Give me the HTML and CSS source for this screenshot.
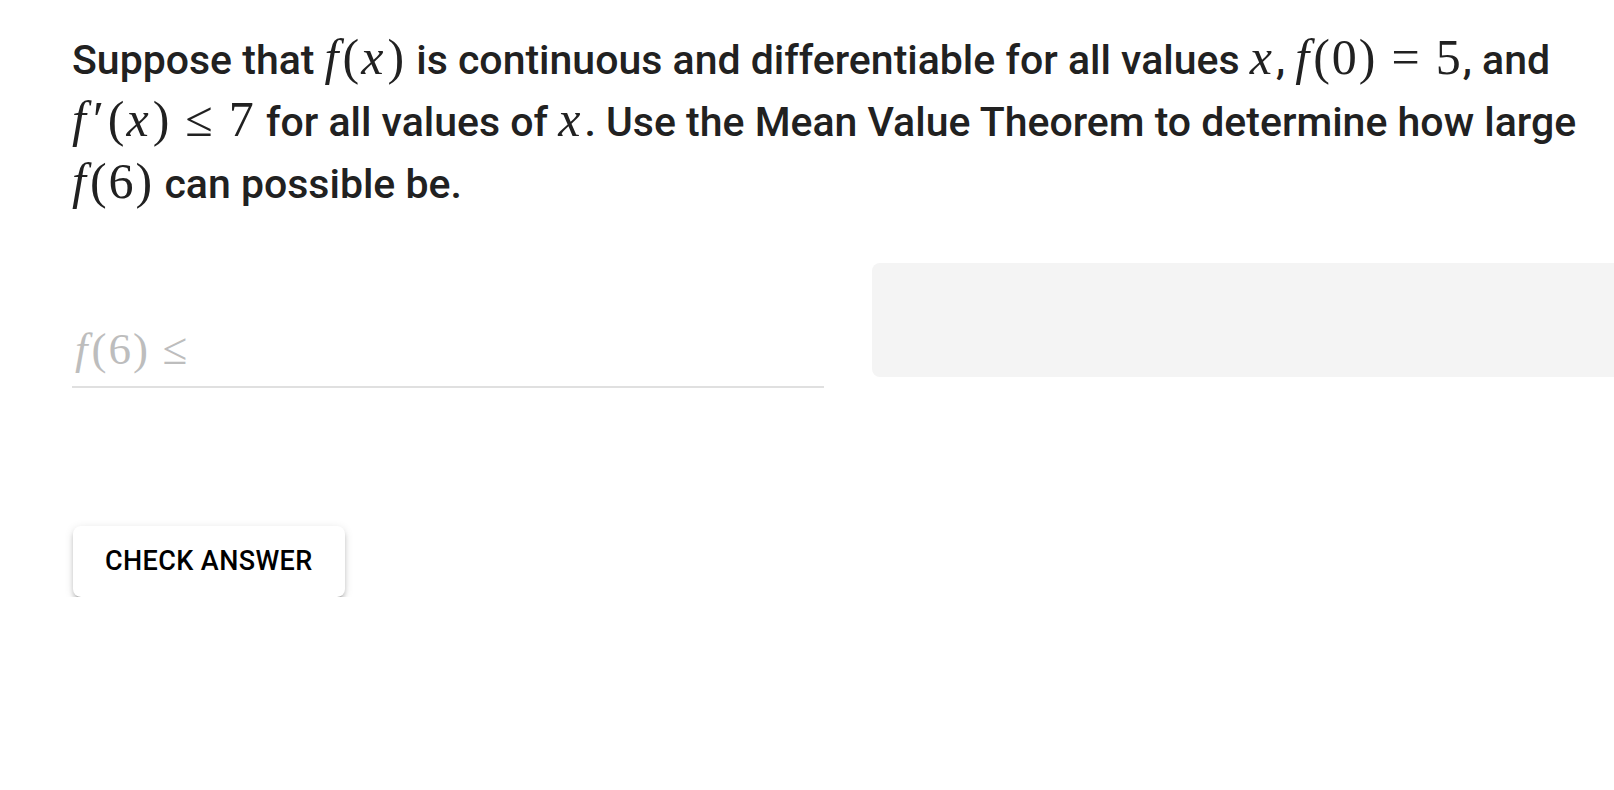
FILE: index.html
```html
<!DOCTYPE html>
<html lang="en">
<head>
    <meta charset="UTF-8">
    <meta name="viewport" content="width=device-width, initial-scale=1.0">
    <title>Mean Value Theorem</title>
    <link rel="stylesheet" href="styles.css">
</head>
<body>
    <div class="page">
        <p class="question">
            Suppose that <span class="math"><i>f</i>(<i>x</i>)</span> is continuous and differentiable for all values
            <span class="math"><i>x</i></span>, <span class="math"><i>f</i>(0)<span class="rel">=</span>5</span>, and
            <span class="math"><i>f</i><span class="prime">&#8242;</span>(<i>x</i>)<span class="rel">&le;</span>7</span> for all values of
            <span class="math"><i>x</i></span>. Use the Mean Value Theorem to determine how large
            <span class="math"><i>f</i>(6)</span> can possible be.
        </p>

        <div class="answer">
            <div class="field">
                <span class="math placeholder"><i>f</i>(6)<span class="rel">&le;</span></span>
            </div>
            <div class="feedback"></div>
        </div>

        <button class="check">Check answer</button>
    </div>
</body>
</html>
```

FILE: styles.css
```css
*{
    margin: 0;
    padding: 0;
    box-sizing: border-box;
}
body{
    font-family: Roboto, "Liberation Sans", Arial, sans-serif;
    color: #212121;
    background-color: #fff;
    overflow: hidden;
}
.page{
    width: 1624px;
    padding: 29px 0 0 72px;
}
.question{
    width: 1520px;
    font-size: 41px;
    font-weight: 500;
    line-height: 62px;
}
.math{
    font-family: "Liberation Serif", "DejaVu Serif", serif;
    font-size: 50px;
    font-weight: normal;
    line-height: 1;
    letter-spacing: 2px;
    white-space: nowrap;
}
.math i{
    font-style: italic;
    padding-right: 2px;
}
.prime{
    margin: 0 2px 0 3px;
}
.rel{
    margin: 0 0.28em;
}

.answer{
    display: grid;
    grid-template-columns: 752px 752px;
    gap: 48px;
    align-items: start;
    margin-top: 48px;
}
.field{
    height: 125px;
    display: flex;
    align-items: flex-end;
    padding: 0 0 14px 3px;
    border-bottom: 2px solid #e0e0e0;
}
.placeholder{
    font-size: 45px;
    color: #bdbdbd;
}
.feedback{
    height: 114px;
    background-color: #f4f4f4;
    border-radius: 8px;
}

.check{
    margin-top: 138px;
    margin-left: 1px;
    font-family: Roboto, "Liberation Sans", Arial, sans-serif;
    font-size: 27px;
    font-weight: 500;
    letter-spacing: 0.4px;
    line-height: 47px;
    text-transform: uppercase;
    color: #000;
    background-color: #fff;
    border: none;
    border-radius: 8px;
    padding: 12px 32px;
    box-shadow: 0 6px 2px -4px rgba(0,0,0,0.3), 0 4px 4px 0 rgba(0,0,0,0.16), 0 2px 10px 0 rgba(0,0,0,0.12);
    cursor: pointer;
}
```
